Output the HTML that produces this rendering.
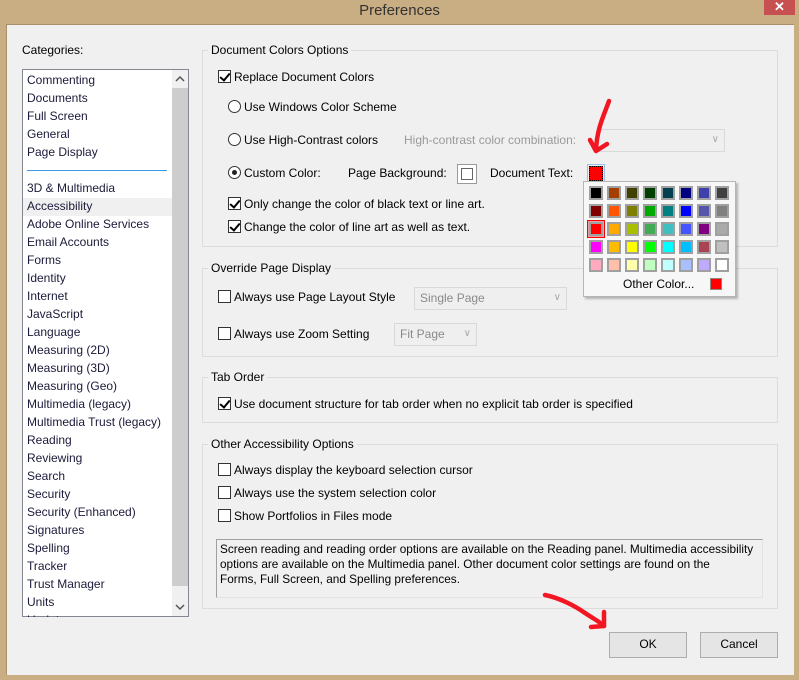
<!DOCTYPE html>
<html><head><meta charset="utf-8"><style>
*{margin:0;padding:0;box-sizing:border-box}
body{width:799px;height:680px;background:#c9ad83;position:relative;overflow:hidden;font-family:"Liberation Sans",sans-serif;font-size:12px;color:#000}
.a{position:absolute;white-space:nowrap}
.t{position:absolute;white-space:nowrap;line-height:14px}
.cb{position:absolute;width:13px;height:13px;border:1px solid #333;background:#fff}
.cb.on::after{content:"";position:absolute;left:3px;top:0px;width:4px;height:8px;border:solid #000;border-width:0 2px 2px 0;transform:rotate(40deg)}
.rd{position:absolute;width:13px;height:13px;border:1px solid #333;border-radius:50%;background:#fff}
.rd.on::after{content:"";position:absolute;left:3px;top:3px;width:5px;height:5px;border-radius:50%;background:#222}
.grp{position:absolute;border:1px solid #dcdcdc}
.gl{position:absolute;background:#f0f0f0;padding:0 3px;line-height:14px}
.combo{position:absolute;border:1px solid #d9d9d9;background:#efefef;color:#8a8a8a;padding-left:5px;line-height:20px}
.combo::after{content:"\2228";position:absolute;right:5px;top:0;color:#aaa;font-size:10px}
.li{position:absolute;left:27px;line-height:14px;color:#1a1a3a}
.sw{position:absolute;width:14px;height:14px;border:2px solid #a0a0a0}
.btn{position:absolute;border:1px solid #adadad;background:#e5e5e5;text-align:center;line-height:23px}
</style></head><body>
<div class="a" style="left:0;top:0;width:799px;text-align:center;top:2px;font-size:15px;color:#333;line-height:18px">Preferences</div>
<div class="a" style="left:764px;top:0;width:31px;height:15px;background:#c75050;color:#fff;text-align:center;font-size:13px;line-height:14px;font-weight:bold">✕</div>
<div class="a" style="left:6px;top:24px;width:788px;height:651px;background:#f0f0f0;border-top:1px solid #a88f69;border-left:1px solid #a88f69"></div>

<div class="t" style="left:22px;top:43px">Categories:</div>
<div class="a" style="left:22px;top:69px;width:167px;height:548px;background:#fff;border:1px solid #828790;overflow:hidden">
 <div class="a" style="left:149px;top:0;width:16px;height:546px;background:#f0f0f0"></div>
 <div class="a" style="left:149px;top:18px;width:16px;height:498px;background:#cdcdcd"></div>
 <svg class="a" style="left:149px;top:0" width="16" height="18"><path d="M4 11 L8 7 L12 11" fill="none" stroke="#555" stroke-width="1.5"/></svg>
 <svg class="a" style="left:149px;top:528px" width="16" height="18"><path d="M4 7 L8 11 L12 7" fill="none" stroke="#555" stroke-width="1.5"/></svg>
 <div class="a" style="left:0;top:128px;width:149px;height:18px;background:#f0f0f0"></div>
 <div class="a" style="left:4px;top:100px;width:140px;height:1px;background:#3c9be8"></div>
</div>
<div id="items"></div>

<div class="grp" style="left:202px;top:50px;width:576px;height:197px"></div>
<div class="gl" style="left:208px;top:43px">Document Colors Options</div>
<div class="cb on" style="left:218px;top:70px"></div><div class="t" style="left:234px;top:70px">Replace Document Colors</div>
<div class="rd" style="left:228px;top:100px"></div><div class="t" style="left:244px;top:100px">Use Windows Color Scheme</div>
<div class="rd" style="left:228px;top:133px"></div><div class="t" style="left:244px;top:133px">Use High-Contrast colors</div>
<div class="t" style="left:404px;top:133px;color:#9a9a9a">High-contrast color combination:</div>
<div class="combo" style="left:597px;top:129px;width:128px;height:23px"></div>
<div class="rd on" style="left:228px;top:166px"></div><div class="t" style="left:244px;top:166px">Custom Color:</div>
<div class="t" style="left:348px;top:166px">Page Background:</div>
<div class="a" style="left:457px;top:164px;width:20px;height:20px;border:1px solid #999;background:#fff"><div class="a" style="left:3px;top:3px;width:12px;height:12px;border:1px solid #666"></div></div>
<div class="t" style="left:490px;top:166px">Document Text:</div>
<div class="a" style="left:587px;top:164px;width:18px;height:19px;border:1px solid #9ac0e8"><div class="a" style="left:1px;top:1px;width:14px;height:15px;border:1px dotted #000;background:#f00"></div></div>
<div class="cb on" style="left:228px;top:197px"></div><div class="t" style="left:244px;top:197px">Only change the color of black text or line art.</div>
<div class="cb on" style="left:228px;top:220px"></div><div class="t" style="left:244px;top:220px">Change the color of line art as well as text.</div>

<div class="grp" style="left:202px;top:268px;width:576px;height:89px"></div>
<div class="gl" style="left:208px;top:261px">Override Page Display</div>
<div class="cb" style="left:218px;top:290px"></div><div class="t" style="left:234px;top:290px">Always use Page Layout Style</div>
<div class="combo" style="left:414px;top:287px;width:153px;height:23px">Single Page</div>
<div class="cb" style="left:218px;top:327px"></div><div class="t" style="left:234px;top:327px">Always use Zoom Setting</div>
<div class="combo" style="left:394px;top:323px;width:83px;height:23px">Fit Page</div>

<div class="grp" style="left:202px;top:377px;width:576px;height:46px"></div>
<div class="gl" style="left:208px;top:370px">Tab Order</div>
<div class="cb on" style="left:218px;top:397px"></div><div class="t" style="left:234px;top:397px">Use document structure for tab order when no explicit tab order is specified</div>

<div class="grp" style="left:202px;top:444px;width:576px;height:165px"></div>
<div class="gl" style="left:208px;top:437px">Other Accessibility Options</div>
<div class="cb" style="left:218px;top:463px"></div><div class="t" style="left:234px;top:463px">Always display the keyboard selection cursor</div>
<div class="cb" style="left:218px;top:486px"></div><div class="t" style="left:234px;top:486px">Always use the system selection color</div>
<div class="cb" style="left:218px;top:509px"></div><div class="t" style="left:234px;top:509px">Show Portfolios in Files mode</div>
<div class="a" style="left:216px;top:539px;width:547px;height:59px;border:1px solid #a0a0a0;border-right-color:#e3e3e3;border-bottom-color:#e3e3e3;padding:2px 3px;line-height:15px;font-size:11.8px">Screen reading and reading order options are available on the Reading panel. Multimedia accessibility<br>options are available on the Multimedia panel. Other document color settings are found on the<br>Forms, Full Screen, and Spelling preferences.</div>

<div class="btn" style="left:609px;top:632px;width:78px;height:26px">OK</div>
<div class="btn" style="left:700px;top:632px;width:78px;height:26px">Cancel</div>

<div class="a" style="left:583px;top:181px;width:153px;height:116px;background:#f7f7f7;border:1px solid #b5b5b5;box-shadow:2px 2px 2px rgba(0,0,0,.25)"></div>
<div id="pal"></div>
<div class="t" style="left:623px;top:277px">Other Color...</div>
<div class="a" style="left:710px;top:278px;width:12px;height:12px;background:#f00;border:1px solid #888"></div>

<svg class="a" style="left:0;top:0" width="799" height="680">
<g fill="none" stroke="#f21622" stroke-width="4.5" stroke-linecap="round" stroke-linejoin="round">
<path d="M609 101 C604 115 597 128 596 150"/>
<path d="M590 140 L596 151 L607 144"/>
<path d="M545 595 C560 598 575 606 585 613 C594 619 600 622 604 626"/>
<path d="M604 612 L604 626 L591 627"/>
</g></svg>

<script>
var it=["Commenting","Documents","Full Screen","General","Page Display","","3D & Multimedia","Accessibility","Adobe Online Services","Email Accounts","Forms","Identity","Internet","JavaScript","Language","Measuring (2D)","Measuring (3D)","Measuring (Geo)","Multimedia (legacy)","Multimedia Trust (legacy)","Reading","Reviewing","Search","Security","Security (Enhanced)","Signatures","Spelling","Tracker","Trust Manager","Units"];
var h="";it.forEach(function(s,i){if(s)h+='<div class="li" style="top:'+(73+i*18)+'px">'+s.replace("&","&amp;")+'</div>';});
h+='<div class="li" style="top:613px;height:4px;overflow:hidden;line-height:14px">Updater</div>';
document.getElementById("items").innerHTML=h;
var c=[["000000","a34000","404000","004000","004050","000080","4040aa","404040"],["800000","ff5500","808000","00aa00","008080","0000ff","5555aa","808080"],["ff0000","ffaa00","aabf00","40aa55","40bfbf","4455ff","800080","aaaaaa"],["ff00ff","ffbb00","ffff00","00ff00","00ffff","00bfff","aa4455","c0c0c0"],["ffaabf","ffbfaa","ffffaa","bfffbf","bfffff","aabfff","bfaaff","ffffff"]];
var p="";c.forEach(function(r,ri){r.forEach(function(col,ci){var x=589+ci*18,y=186+ri*18;
if(ri==2&&ci==0)p+='<div class="a" style="left:'+(x-2)+'px;top:'+(y-2)+'px;width:18px;height:18px;border:1px solid #f00;background:#e8a0a0"></div>';
p+='<div class="sw" style="left:'+x+'px;top:'+y+'px;background:#'+col+'"></div>';});});
document.getElementById("pal").innerHTML=p;
</script>
</body></html>
